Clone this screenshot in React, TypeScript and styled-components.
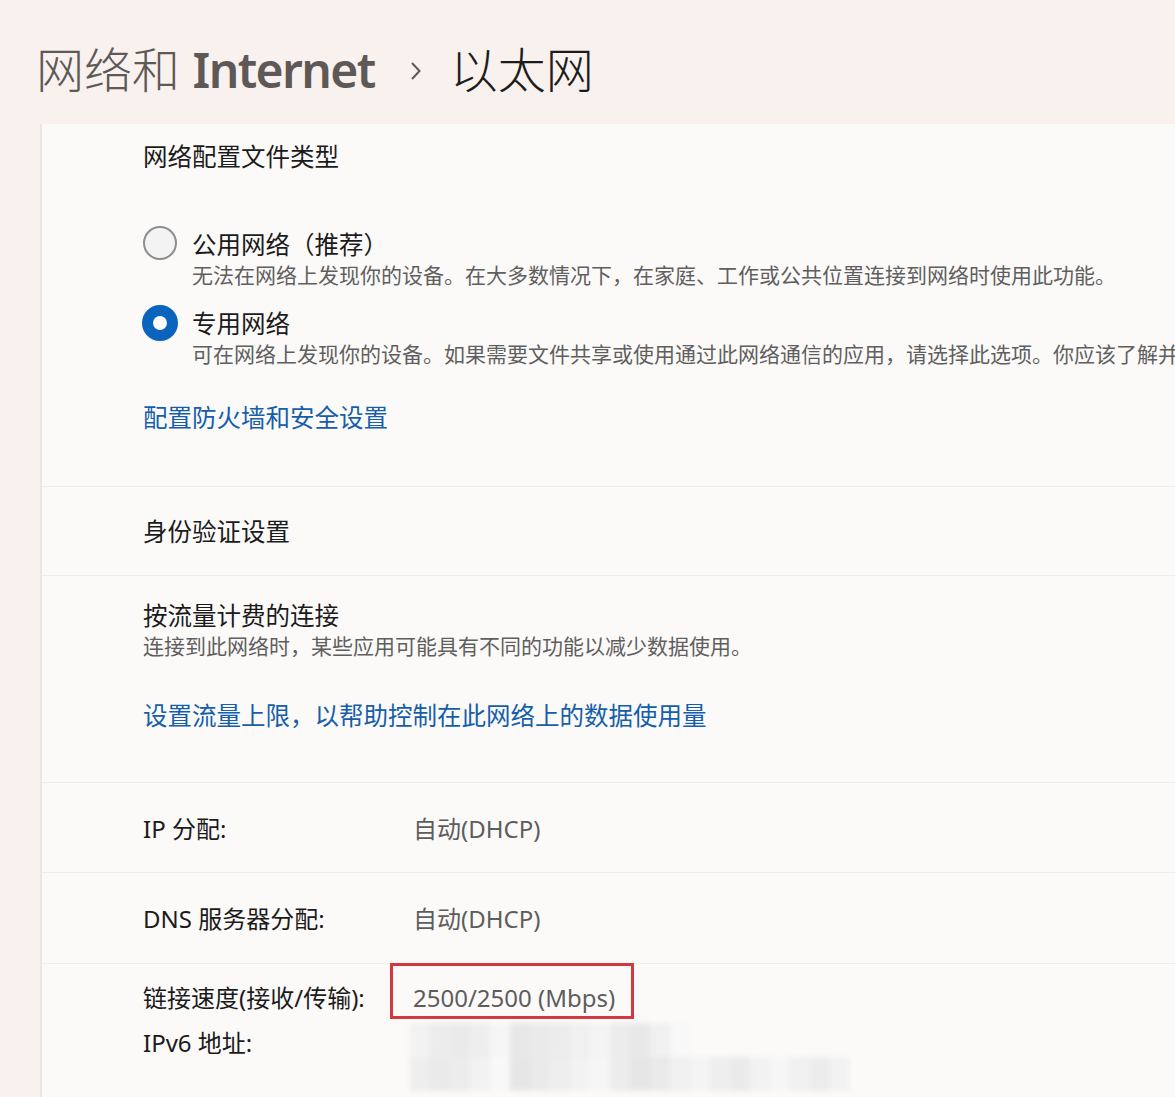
import React from 'react';
import styled, { createGlobalStyle } from 'styled-components';

const GlobalStyle = createGlobalStyle`
    html, body {
        margin: 0;
        padding: 0;
        overflow: hidden;
        background: #f8f1ee;
    }
    body {
        font-family: "Noto Sans", "Noto Sans CJK SC", sans-serif;
        color: #1b1b1b;
    }
`;

const Page = styled.div`
    width: 1175px;
    height: 1097px;
    overflow: hidden;
`;

const Header = styled.header`
    height: 124px;
    box-sizing: border-box;
    padding: 40px 0 0 36px;
    display: flex;
    align-items: flex-start;
`;

const Crumb = styled.span<{ $current?: boolean }>`
    font-size: 48px;
    font-weight: 300;
    line-height: 60px;
    height: 60px;
    color: ${props => props.$current ? '#1c1c1c' : '#5e5856'};
    white-space: nowrap;
`;

const CrumbLatin = styled.span`
    font-weight: 600;
    letter-spacing: -1.6px;
`;

const Chevron = styled.svg`
    margin: 21px 28px 0 35px;
    flex-shrink: 0;
`;

const Card = styled.main`
    margin-left: 40px;
    background: #fcfaf9;
    border-left: 2px solid #ebe5e3;
    min-height: 973px;
`;

const Section = styled.section<{ $pad: string }>`
    padding: ${props => props.$pad};
    padding-left: 101px;
    border-top: 1px solid #f2ece9;

    &:first-child {
        border-top: none;
    }
`;

const Heading = styled.div`
    font-size: 24.5px;
    line-height: 30px;
    color: #1b1b1b;
    white-space: nowrap;
`;

const Desc = styled.div`
    font-size: 21px;
    line-height: 30px;
    color: #5f5f5f;
    white-space: nowrap;
`;

const Link = styled.a<{ $gap: number }>`
    display: block;
    margin-top: ${props => props.$gap}px;
    font-size: 24.5px;
    line-height: 30px;
    color: #155ea9;
    text-decoration: none;
    white-space: nowrap;
`;

const Options = styled.div`
    margin-top: 58px;
    display: flex;
    flex-direction: column;
    gap: 19px;
`;

const Option = styled.label`
    display: grid;
    grid-template-columns: 49px 1fr;
    align-items: start;
`;

const Radio = styled.span<{ $checked?: boolean }>`
    margin-top: -4px;
    box-sizing: border-box;
    width: ${props => props.$checked ? 36 : 34}px;
    height: ${props => props.$checked ? 36 : 34}px;
    margin-left: ${props => props.$checked ? -1 : 0}px;
    border-radius: 50%;
    background: ${props => props.$checked ? '#ffffff' : '#f3f3f3'};
    border: ${props => props.$checked ? '11px solid #0a64be' : '2px solid #8d8d8d'};
`;

const InfoGrid = styled.div<{ $label: number }>`
    display: grid;
    grid-template-columns: ${props => props.$label}px 1fr;
    align-items: start;
`;

const Label = styled.div<{ $top?: number }>`
    font-size: 24px;
    line-height: 30px;
    color: #1b1b1b;
    white-space: nowrap;
    padding-top: ${props => props.$top ?? 0}px;
`;

const Value = styled.div`
    font-size: 24px;
    line-height: 30px;
    color: #5d5d5d;
    white-space: nowrap;
`;

const Highlight = styled.div`
    justify-self: start;
    width: 244px;
    box-sizing: border-box;
    border: 3px solid #d2393f;
    padding: 17px 20px 3px 20px;
    margin-top: -1px;
`;

const Mosaic = styled.div`
    margin: 4px 0 0 20px;
    display: flex;
    flex-direction: column;
    filter: blur(2.5px);
`;

const MosaicRow = styled.div`
    display: flex;
`;

const Cell = styled.span<{ $shade: number }>`
    width: 20px;
    height: 34px;
    background: rgb(${p => p.$shade}, ${p => p.$shade}, ${p => p.$shade});
`;

const topShades = [242, 236, 234, 238, 246, 232, 234, 236, 240, 244, 236, 232, 240, 248];
const bottomShades = [238, 234, 236, 242, 248, 230, 234, 238, 242, 246, 236, 230, 234, 240, 244, 238, 234, 242, 246, 240, 236, 242];

export default function App() {
    return (
        <Page>
            <GlobalStyle />
            <Header>
                <Crumb>网络和 <CrumbLatin>Internet</CrumbLatin></Crumb>
                <Chevron width="12" height="20" viewBox="0 0 12 20">
                    <path d="M2 2 L9.5 10 L2 18" fill="none" stroke="#5e5856" strokeWidth="2" />
                </Chevron>
                <Crumb $current>以太网</Crumb>
            </Header>
            <Card>
                <Section $pad="18px 0 53px">
                    <Heading>网络配置文件类型</Heading>
                    <Options>
                        <Option>
                            <Radio />
                            <div>
                                <Heading>公用网络（推荐）</Heading>
                                <Desc>无法在网络上发现你的设备。在大多数情况下，在家庭、工作或公共位置连接到网络时使用此功能。</Desc>
                            </div>
                        </Option>
                        <Option>
                            <Radio $checked />
                            <div>
                                <Heading>专用网络</Heading>
                                <Desc>可在网络上发现你的设备。如果需要文件共享或使用通过此网络通信的应用，请选择此选项。你应该了解并信任此网络上的人员和设备。</Desc>
                            </div>
                        </Option>
                    </Options>
                    <Link href="#" $gap={34}>配置防火墙和安全设置</Link>
                </Section>
                <Section $pad="30px 0 28px">
                    <Heading>身份验证设置</Heading>
                </Section>
                <Section $pad="25px 0 51px">
                    <Heading>按流量计费的连接</Heading>
                    <Desc>连接到此网络时，某些应用可能具有不同的功能以减少数据使用。</Desc>
                    <Link href="#" $gap={40}>设置流量上限，以帮助控制在此网络上的数据使用量</Link>
                </Section>
                <Section $pad="31px 0 28px">
                    <InfoGrid $label={270}>
                        <Label>IP 分配:</Label>
                        <Value>自动(DHCP)</Value>
                    </InfoGrid>
                </Section>
                <Section $pad="31px 0 29px">
                    <InfoGrid $label={270}>
                        <Label>DNS 服务器分配:</Label>
                        <Value>自动(DHCP)</Value>
                    </InfoGrid>
                </Section>
                <Section $pad="0 0 0">
                    <InfoGrid $label={247}>
                        <Label $top={19}>链接速度(接收/传输):</Label>
                        <Highlight>
                            <Value>2500/2500 (Mbps)</Value>
                        </Highlight>
                        <Label $top={9}>IPv6 地址:</Label>
                        <Mosaic>
                            <MosaicRow>
                                {topShades.map((s, i) => <Cell key={i} $shade={s} />)}
                            </MosaicRow>
                            <MosaicRow>
                                {bottomShades.map((s, i) => <Cell key={i} $shade={s} />)}
                            </MosaicRow>
                        </Mosaic>
                    </InfoGrid>
                </Section>
            </Card>
        </Page>
    );
}
